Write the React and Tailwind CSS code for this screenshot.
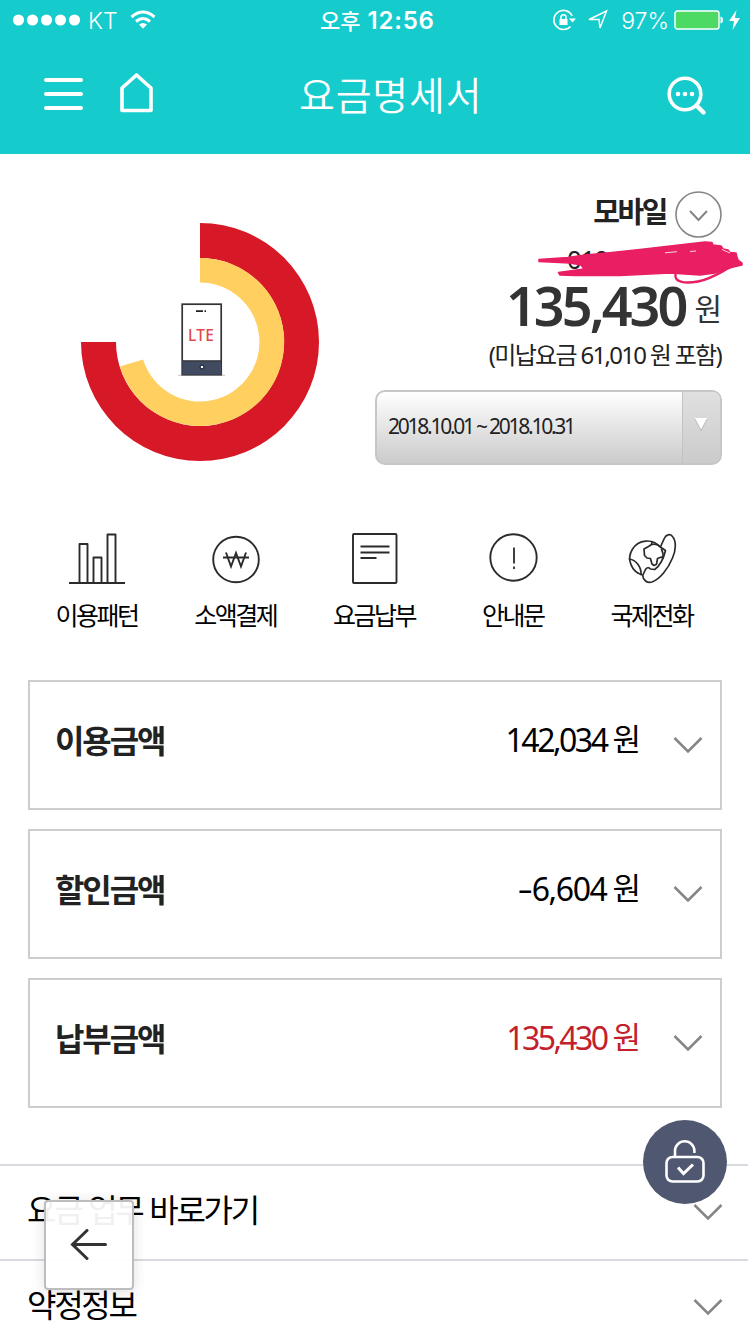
const KR = "font-['Noto_Sans','Noto_Sans_CJK_KR',sans-serif]";

function Chevron({ className }) {
  return (
    <svg className={className} width="30" height="20" viewBox="0 0 30 20" fill="none" stroke="#858585" strokeWidth="2.5">
      <path d="M1.5 3 L15 16.5 L28.5 3" />
    </svg>
  );
}

function StatusBar() {
  return (
    <div className="relative flex h-10 items-center justify-between pl-3 pr-[9px] text-[23px] leading-[40px]">
      <div className="flex items-center font-['Inter',sans-serif] font-light">
        <svg width="70" height="14" viewBox="0 0 70 14" fill="#fff">
          <circle cx="6.5" cy="7" r="5.6" />
          <circle cx="20.5" cy="7" r="5.6" />
          <circle cx="34.5" cy="7" r="5.6" />
          <circle cx="48.5" cy="7" r="5.6" />
          <circle cx="62.5" cy="7" r="5.6" />
        </svg>
        <span className="ml-[6px] pt-px">KT</span>
        <svg className="ml-[12px]" width="26" height="20" viewBox="0 0 26 20" fill="none" stroke="#fff" strokeWidth="3">
          <path d="M1.5 7 Q13 -3 24.5 7" />
          <path d="M6 11.5 Q13 5.5 20 11.5" />
          <path d="M9 14.5 Q13 11.5 17 14.5 L13 18.8 Z" fill="#fff" stroke="none" />
        </svg>
      </div>
      <div className="absolute left-[320px] top-0 flex whitespace-nowrap">
        <span className="font-['Noto_Sans_CJK_KR',sans-serif] text-[22px] font-medium leading-[38px]">오후</span>
        <span className="ml-[7px] font-['Inter',sans-serif] text-[24px] font-semibold leading-[41px] tracking-[0.8px]">12:56</span>
      </div>
      <div className="flex items-center font-['Inter',sans-serif] font-light">
        <svg width="24" height="24" viewBox="0 0 24 24" fill="none" stroke="#fff" strokeWidth="1.6">
          <path d="M20.2 8 A9.6 9.6 0 1 0 18.5 18.5" />
          <path d="M17 10.5 H24 L20.5 14.5 Z" fill="#fff" stroke="none" />
          <rect x="7.5" y="11" width="8" height="6" fill="#fff" stroke="none" />
          <path d="M9 11.5 V9.3 A2.5 2.5 0 0 1 14 9.3 V11.5" />
        </svg>
        <svg className="ml-[11px]" width="22" height="22" viewBox="0 0 22 22" fill="none" stroke="#fff" strokeWidth="1.5">
          <path d="M2 10.5 L19.5 2 L13 19 L12 10.5 Z" />
        </svg>
        <span className="ml-[12px] pt-px text-[23px]">97%</span>
        <svg className="ml-[5px]" width="50" height="20" viewBox="0 0 50 20">
          <rect x="1" y="1" width="44" height="18" rx="2.5" fill="#4cd964" stroke="#fff" strokeWidth="1.4" />
          <path d="M46.5 6.5 Q49 7 49 10 Q49 13 46.5 13.5 Z" fill="#fff" />
        </svg>
        <svg className="ml-[4px]" width="13" height="20" viewBox="0 0 13 20" fill="#fff">
          <path d="M8.5 0 L1 11 H6 L4.5 20 L12 8 H7 Z" />
        </svg>
      </div>
    </div>
  );
}

function Header() {
  return (
    <header className="h-[154px] bg-[#15cbcc] text-white">
      <StatusBar />
      <div className="flex h-[108px] items-center pl-[43px] pr-[42px]">
        <svg width="41" height="36" viewBox="0 0 41 36" stroke="#fff" strokeWidth="4" strokeLinecap="round">
          <path d="M3 4 H38 M3 18 H38 M3 32 H38" />
        </svg>
        <svg className="ml-[35px]" width="36" height="42" viewBox="0 0 36 42" fill="none" stroke="#fff" strokeWidth="3.6">
          <path d="M3 37.5 V15 L17.5 2 L32 15 V37.5 Z" strokeLinejoin="round" />
        </svg>
        <h1 className="-mt-[2px] ml-[144px] whitespace-nowrap font-['Noto_Sans_CJK_KR',sans-serif] text-[39px] font-[350] leading-[56px] tracking-[0.8px]">요금명세서</h1>
        <svg className="ml-auto mt-[3px]" width="42" height="42" viewBox="0 0 42 42" fill="none" stroke="#fff" strokeWidth="3.6">
          <circle cx="19" cy="19" r="15.8" />
          <path d="M30.5 30.5 L37.5 37.5" strokeWidth="4.4" strokeLinecap="round" />
          <g fill="#fff" stroke="none">
            <circle cx="12" cy="19" r="2.3" />
            <circle cx="19" cy="19" r="2.3" />
            <circle cx="26" cy="19" r="2.3" />
          </g>
        </svg>
      </div>
    </header>
  );
}

function UsageChart() {
  return (
    <svg className="mt-[68px] shrink-0" width="240" height="240" viewBox="80 222 240 240">
      <path d="M200 223 A119 119 0 1 1 81 342 H116 A84 84 0 1 0 200 258 Z" fill="#d71826" />
      <path d="M200 258 A84 84 0 1 1 119.9 366.5 L143.1 359.5 A59.5 59.5 0 1 0 200 282.5 Z" fill="#ffcf60" />
      <path d="M178 375.3 H225" stroke="#c9c4c0" strokeWidth="1" />
      <rect x="182.2" y="304.2" width="39" height="70.5" fill="#fff" stroke="#333338" strokeWidth="1.7" />
      <rect x="182.5" y="360.8" width="38.4" height="13.8" fill="#404b62" />
      <path d="M182 360.8 H221" stroke="#333338" strokeWidth="1.3" />
      <circle cx="202" cy="367" r="1.9" fill="#fff" stroke="#222a3a" strokeWidth="1.2" />
      <path d="M196 311.2 H203 M204.5 311.2 H206" stroke="#222" strokeWidth="1.8" />
      <text x="188" y="340.8" fontSize="15.5" fontWeight="500" fill="#e0484e" fontFamily="'Noto Sans', sans-serif" textLength="26">LTE</text>
    </svg>
  );
}

function Scribble() {
  return (
    <svg className="absolute right-[-22px] top-[84px]" width="208" height="48" viewBox="536 238 208 48">
      <path d="M539 259.5 L568 257.5 L585 255 L612 252.5 L640 249.5 L705 242 L712 242.5 L713 245 L721 246 L723 249 L728 250 L730 252.5 L736 253 L737 257 L738 260 L742 263 L742 265 L731 267.5 L715 273 L700 275 L670 273 L620 275.5 L575 275.5 L560 275 L558.5 272.5 L584 269 L581 265 L570 263 L539 261.5 Z" fill="#e91e63" stroke="#e91e63" strokeWidth="1.5" strokeLinejoin="round" />
      <path d="M675.5 274 C674 283 686 283.5 698 281.5 C712 279 722 271 733 266" fill="none" stroke="#e91e63" strokeWidth="2.4" />
      <path d="M665 252.8 L677 251.7 M690 251.5 L696 251 M722 249.5 L730 253" stroke="#fff" strokeWidth="0.8" />
    </svg>
  );
}

function Summary() {
  return (
    <section className="flex h-[372px] justify-between pl-20 pr-7">
      <UsageChart />
      <div className="relative flex w-[347px] flex-col items-end pt-[37px] text-[#222]">
        <div className="flex h-[47px] items-start">
          <span className="mr-[9px] whitespace-nowrap font-['Noto_Sans_CJK_KR',sans-serif] text-[29px] font-bold leading-[39px] tracking-[-2.4px]">모바일</span>
          <svg width="47" height="47" viewBox="0 0 47 47" fill="none" stroke="#858585" strokeWidth="1.6">
            <circle cx="23.5" cy="23.5" r="22.5" />
            <path d="M15 20 L23.5 29 L32 20" strokeWidth="2" />
          </svg>
        </div>
        <div className={`${KR} mr-[114px] mt-[7px] h-[34px] text-[26px] leading-[28px] tracking-[-1.2px]`}>010</div>
        <Scribble />
        <div className="flex h-[58px] items-start whitespace-nowrap text-[#333]">
          <span className="mt-[4px] font-['Noto_Sans',sans-serif] text-[54px] font-semibold leading-[44px] tracking-[-3px]">135,430</span>
          <span className="ml-[9px] mt-[8px] font-['Noto_Sans_CJK_KR',sans-serif] text-[30px] leading-[40px]">원</span>
        </div>
        <div className={`${KR} mr-[1px] whitespace-nowrap text-[24px] leading-[36px] tracking-[-1.7px]`}>(미납요금 61,010 원 포함)</div>
        <div className="mt-[17px] flex h-[75px] w-full overflow-hidden rounded-[10px] border-2 border-[#c6c6c6] bg-linear-to-b from-white to-[#cbcbcb]">
          <div className={`${KR} flex-1 whitespace-nowrap pl-[11px] text-[21px] leading-[68px] tracking-[-2.25px]`}>2018.10.01 ~ 2018.10.31</div>
          <div className="flex w-[38px] items-start justify-center border-l border-[#c2c2c2] bg-linear-to-b from-[#e0e0e0] to-[#cbcbcb] pr-px pt-[25px]">
            <svg width="14" height="14" viewBox="0 0 14 14">
              <path d="M0.5 1 H13.5 L7 13.5 Z" fill="#fff" />
              <path d="M1 2 L7 13.5 L13 2" fill="none" stroke="#a8a8a8" strokeWidth="0.7" />
            </svg>
          </div>
        </div>
      </div>
    </section>
  );
}

const shortcuts = [
  {
    label: "이용패턴",
    art: (
      <>
        <path d="M2 53 H58" strokeWidth="2.2" />
        <path d="M12.5 53 V14 H20.5 V53 M26.5 53 V27.5 H34.5 V53 M40.5 53 V4.5 H48.5 V53" strokeLinejoin="round" />
      </>
    ),
  },
  {
    label: "소액결제",
    art: (
      <>
        <circle cx="30" cy="29.5" r="22.8" />
        <path d="M17 27.5 H43 M20 22.5 L25 36.5 L30 23 L35 36.5 L40 22.5" />
      </>
    ),
  },
  {
    label: "요금납부",
    art: (
      <>
        <rect x="8" y="4" width="43.5" height="49" rx="1" />
        <path d="M15.5 16.5 H44.5 M15.5 22.5 H44.5 M15.5 28 H31.5" />
      </>
    ),
  },
  {
    label: "안내문",
    art: (
      <>
        <circle cx="29.5" cy="27.5" r="23.2" />
        <path d="M30 17.5 V33.5 M30 36.5 V39" strokeWidth="1.8" />
      </>
    ),
  },
  {
    label: "국제전화",
    art: (
      <g strokeWidth="1.7" strokeLinejoin="round" strokeLinecap="round">
        <path d="M19.5 45 A17.3 17.3 0 1 1 37 16.8 M38.5 19 Q40.5 23 40 28" />
        <path d="M6.3 29 C13 30 18.5 37 18 44.5" />
        <path d="M29 11.5 L28.5 14.5 L25.5 16.5 L21 19 L21.5 25.5 L24 28 L27.4 28.5 L29 34 L31 35.5 L33.5 34.3 L34.5 28.5 L38.5 27 L40 28" />
        <path d="M29 14.5 Q34 13 37.4 17 L41.5 8 C43 4.5 47 3.5 49.5 6.5 C53.5 11 53 20 49.5 28 C45 39 37 49 29 52 C24 53.5 20 50 19.7 45.5 L22.5 39.5 C23.5 37.5 25.5 37 27.5 39 L31.7 39.5 C36.5 36 40.5 29 42.5 20.5 L37.4 17" />
      </g>
    ),
  },
];

function Shortcuts() {
  return (
    <nav className="grid h-[154px] grid-cols-5 px-7 pt-[4px]">
      {shortcuts.map((item) => (
        <div key={item.label} className="flex flex-col items-center">
          <svg width="60" height="60" viewBox="0 0 60 60" fill="none" stroke="#2b2b2b" strokeWidth="1.9">
            {item.art}
          </svg>
          <span className="mr-[2px] mt-[6px] whitespace-nowrap font-['Noto_Sans_CJK_KR',sans-serif] text-[25px] leading-[37px] tracking-[-2.5px] text-black">{item.label}</span>
        </div>
      ))}
    </nav>
  );
}

function AmountCard({ label, sign, amount, color, tracking }) {
  return (
    <div className="flex h-[130px] items-start border-2 border-[#cdcdcd] pl-[25px] pr-[17px]">
      <span className="mt-[37px] whitespace-nowrap font-['Noto_Sans_CJK_KR',sans-serif] text-[32px] font-bold leading-[40px] tracking-[-2.1px] text-[#222]">{label}</span>
      <span className={`${color} ml-auto mt-[37px] flex items-baseline whitespace-nowrap leading-[40px]`}>
        <span className={`font-['Noto_Sans',sans-serif] text-[32px] ${tracking}`}>
          {sign && <span className="mr-px inline-block origin-right scale-x-150">{sign}</span>}
          {amount}
        </span>
        <span className="relative -top-px ml-[6px] font-['Noto_Sans_CJK_KR',sans-serif] text-[31px]">원</span>
      </span>
      <Chevron className="ml-[32px] mt-[53px]" />
    </div>
  );
}

function LinkRow({ label }) {
  return (
    <div className="mr-[2px] flex h-[95px] items-start border-t-2 border-[#d9d9e0] pl-[27px] pr-[25px]">
      <span className="mt-[22px] whitespace-nowrap font-['Noto_Sans_CJK_KR',sans-serif] text-[32px] leading-[40px] tracking-[-2.3px] text-black [word-spacing:2px]">{label}</span>
      <Chevron className="ml-auto mt-[36px]" />
    </div>
  );
}

export default function App() {
  return (
    <div className="relative h-[1334px] w-[750px] overflow-hidden bg-white">
      <Header />
      <Summary />
      <Shortcuts />
      <section className="flex flex-col gap-[19px] px-7">
        <AmountCard label="이용금액" amount="142,034" color="text-black" tracking="tracking-[-2.5px]" />
        <AmountCard label="할인금액" sign="-" amount="6,604" color="text-black" tracking="tracking-[-1.4px]" />
        <AmountCard label="납부금액" amount="135,430" color="text-[#c4202c]" tracking="tracking-[-2.6px]" />
      </section>
      <section className="mt-[56px]">
        <LinkRow label="요금 업무 바로가기" />
        <LinkRow label="약정정보" />
      </section>
      <button className="absolute left-[643px] top-[1120px] flex h-[84px] w-[84px] items-center justify-center rounded-full bg-[#4f5870]">
        <svg className="-mt-[2px]" width="42" height="46" viewBox="0 0 42 46" fill="none" stroke="#fff" strokeWidth="2.6">
          <rect x="2.5" y="19" width="37" height="24.5" rx="6" />
          <path d="M11 19 V13 A9.7 9.7 0 0 1 30.4 13 V15" />
          <path d="M14 29.5 L19.5 35.5 L29 26.5" strokeWidth="3" />
        </svg>
      </button>
      <button className="absolute left-[44px] top-[1200px] flex h-[90px] w-[90px] items-center justify-center rounded-[4px] border-2 border-[#bdbdbd] bg-white/94 shadow-[0_2px_14px_rgba(0,0,0,0.12)]">
        <svg width="38" height="32" viewBox="0 0 38 32" fill="none" stroke="#333" strokeWidth="3" strokeLinecap="round">
          <path d="M35.5 15.5 H2.5 M17 1.5 L2.5 15.5 L17 29.5" />
        </svg>
      </button>
    </div>
  );
}
